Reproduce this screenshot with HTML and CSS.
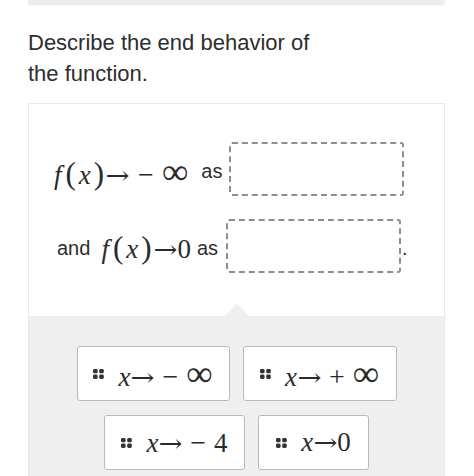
FILE: index.html
```html
<!DOCTYPE html>
<html>
<head>
<meta charset="utf-8">
<link rel="stylesheet" href="styles.css">
</head>
<body>
<div class="page">
  <div class="topbar"></div>
  <p class="prompt">Describe the end behavior of<br>the function.</p>
  <div class="card">
    <div class="stmt">
      <div class="row">
        <span class="math lead"><span class="mi f">f</span><span class="paren">(</span><span class="mi x">x</span><span class="paren">)</span><span class="arr">→</span><span class="op">−</span><span class="inf">∞</span></span>
        <span class="word as1">as</span>
        <span class="drop"></span>
      </div>
      <div class="row">
        <span class="word and">and</span>
        <span class="math"><span class="mi f">f</span><span class="paren">(</span><span class="mi x">x</span><span class="paren">)</span><span class="arr">→</span><span class="num">0</span></span>
        <span class="word as2">as</span>
        <span class="drop drop2"></span>
        <span class="word dot">.</span>
      </div>
    </div>
    <div class="bank">
      <div class="chip w1"><svg class="grip" width="11" height="10" viewBox="0 0 11 10"><rect x="0" y="0" width="4.6" height="4.3" rx="1.4"/><rect x="6.2" y="0" width="4.6" height="4.3" rx="1.4"/><rect x="0" y="5.6" width="4.6" height="4.3" rx="1.4"/><rect x="6.2" y="5.6" width="4.6" height="4.3" rx="1.4"/></svg><span class="math"><span class="mi x">x</span><span class="arr">→</span><span class="op">−</span><span class="inf">∞</span></span></div>
      <div class="chip w2"><svg class="grip" width="11" height="10" viewBox="0 0 11 10"><rect x="0" y="0" width="4.6" height="4.3" rx="1.4"/><rect x="6.2" y="0" width="4.6" height="4.3" rx="1.4"/><rect x="0" y="5.6" width="4.6" height="4.3" rx="1.4"/><rect x="6.2" y="5.6" width="4.6" height="4.3" rx="1.4"/></svg><span class="math"><span class="mi x">x</span><span class="arr">→</span><span class="op">+</span><span class="inf">∞</span></span></div>
      <div class="chip w3"><svg class="grip" width="11" height="10" viewBox="0 0 11 10"><rect x="0" y="0" width="4.6" height="4.3" rx="1.4"/><rect x="6.2" y="0" width="4.6" height="4.3" rx="1.4"/><rect x="0" y="5.6" width="4.6" height="4.3" rx="1.4"/><rect x="6.2" y="5.6" width="4.6" height="4.3" rx="1.4"/></svg><span class="math"><span class="mi x">x</span><span class="arr">→</span><span class="op">−</span><span class="num">4</span></span></div>
      <div class="chip w4"><svg class="grip" width="11" height="10" viewBox="0 0 11 10"><rect x="0" y="0" width="4.6" height="4.3" rx="1.4"/><rect x="6.2" y="0" width="4.6" height="4.3" rx="1.4"/><rect x="0" y="5.6" width="4.6" height="4.3" rx="1.4"/><rect x="6.2" y="5.6" width="4.6" height="4.3" rx="1.4"/></svg><span class="math"><span class="mi x">x</span><span class="arr">→</span><span class="num">0</span></span></div>
    </div>
  </div>
</div>
</body>
</html>
```
FILE: styles.css
```css
html, body {
  margin: 0;
  padding: 0;
  background: #ffffff;
}
body {
  font-family: "Liberation Sans", Arial, sans-serif;
  color: #2e2e2e;
  overflow: hidden;
}
.page {
  width: 417px;
  margin-left: 28px;
}
.topbar {
  height: 5px;
  background: #ececec;
  border-radius: 0 0 3px 3px;
  box-shadow: 0 1px 1px rgba(0,0,0,0.04);
}
.prompt {
  margin: 22px 0 14px;
  font-size: 22px;
  line-height: 31px;
}
.card {
  border: 1px solid #e8e8e8;
  border-bottom: none;
}
.stmt {
  padding: 38px 20px 43px 24px;
  display: flex;
  flex-direction: column;
  gap: 23px;
  background: #fff;
}
.row {
  display: flex;
  align-items: center;
  height: 54px;
}
.word {
  font-size: 20px;
  color: #2e2e2e;
  position: relative;
  top: 2px;
}
.math {
  font-family: "Liberation Serif", "Times New Roman", serif;
  font-size: 27px;
  color: #2b2b2b;
  display: inline-flex;
  align-items: baseline;
  white-space: nowrap;
}
.stmt .math { position: relative; top: 2px; }
.mi { font-style: italic; }
.f { margin-right: 3px; }
.paren { font-size: 31px; margin: 0 1px; }
.x { margin: 0 2px 0 2px; }
.arr {
  font-family: "DejaVu Serif", serif;
  font-size: 25px;
  margin: 0 2px 0 2px;
  display: inline-block;
  transform: scaleX(1.15);
}
.op { margin: 0 8px 0 8px; font-size: 28px; }
.inf { font-size: 37px; }
.lead { margin-left: 1px; }
.as1 { margin-left: 13px; margin-right: 7px; }
.and { margin-left: 4px; margin-right: 11px; }
.as2 { margin-left: 6px; margin-right: 8px; }
.dot { margin-left: 1px; }
.drop {
  box-sizing: border-box;
  width: 175px;
  height: 54px;
  border: 2px dashed #8e8e8e;
  border-radius: 3px;
}
.bank {
  position: relative;
  background: #efefef;
  padding: 30px 0 20px;
  display: flex;
  flex-wrap: wrap;
  justify-content: center;
  gap: 14px 13px;
}
.bank::before {
  content: "";
  position: absolute;
  left: 196px;
  top: -12px;
  border-left: 12px solid transparent;
  border-right: 12px solid transparent;
  border-bottom: 12px solid #efefef;
}
.chip {
  box-sizing: border-box;
  height: 55px;
  background: #fff;
  border: 1px solid #b9b9b9;
  border-radius: 3px;
  display: flex;
  align-items: center;
  justify-content: center;
}
.chip .arr { margin: 0 1px; }
.chip .x { margin: 0 1px 0 0; }
.grip {
  fill: #333;
  margin-right: 14px;
  flex: none;
}
.w1 { width: 153px; }
.w2 { width: 154px; }
.w3 { width: 141px; }
.w4 { width: 111px; }
```
